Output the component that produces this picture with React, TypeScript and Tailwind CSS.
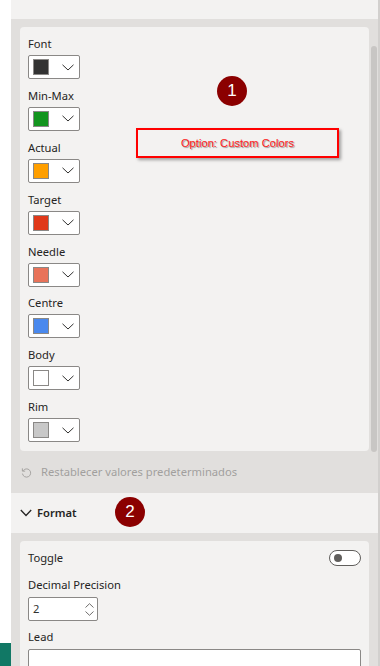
import React from "react";

const font = { fontFamily: '"Segoe UI", "Noto Sans", "Open Sans", sans-serif' };

const items: { label: string; color: string }[] = [
  { label: "Font", color: "#333333" },
  { label: "Min-Max", color: "#13951f" },
  { label: "Actual", color: "#ff9f00" },
  { label: "Target", color: "#e0391a" },
  { label: "Needle", color: "#e8735a" },
  { label: "Centre", color: "#4a89ee" },
  { label: "Body", color: "#ffffff" },
  { label: "Rim", color: "#c8c8c8" },
];

function Chevron() {
  return (
    <svg width="12" height="7" viewBox="0 0 12 7" fill="none">
      <path d="M0.5 0.8 L6 6 L11.5 0.8" stroke="#323130" strokeWidth="1" />
    </svg>
  );
}

function ColorPicker({ color }: { color: string }) {
  return (
    <div className="w-[52px] h-[24px] border border-[#8a8886] rounded-[2px] bg-white flex items-center pl-[4px]">
      <div className="w-[16px] h-[16px] border border-[#8a8886]" style={{ background: color }} />
      <div className="ml-[13px] flex items-center">
        <Chevron />
      </div>
    </div>
  );
}

export default function App() {
  return (
    <div className="w-[380px] h-[666px] flex overflow-hidden bg-white text-[#252423]" style={font}>
      <div className="w-[11px] flex flex-col justify-end">
        <div className="h-[23px] bg-[#117865]" />
      </div>
      <div className="w-[367px] bg-[#e1dfdd] flex flex-col">
        <div className="h-[19px] bg-[#f3f2f1] shrink-0" />
        <div className="flex pt-[8px] shrink-0">
          <div className="ml-[9px] w-[349px] h-[424px] bg-[#f3f2f1] rounded-[4px] relative pt-[9px] pl-[8px] flex flex-col">
            {items.map((it) => (
              <div key={it.label} className="flex flex-col h-[52px]">
                <div className="h-[16px] leading-[16px] text-[11.2px]">{it.label}</div>
                <div className="mt-[3px]">
                  <ColorPicker color={it.color} />
                </div>
              </div>
            ))}
            <div className="absolute left-[197px] top-[49px] w-[30px] h-[30px] rounded-full bg-[#8b0000] text-white flex items-center justify-center text-[17px]" style={{ fontFamily: '"Liberation Sans", Arial, sans-serif' }}>
              1
            </div>
            <div
              className="absolute left-[116px] top-[101px] w-[203px] h-[30px] border-2 border-[#ff0000] flex items-center justify-center text-[11.2px] text-[#ff2020] shadow-[2px_2px_3px_rgba(0,0,0,0.35)]"
              style={{ fontFamily: '"Liberation Sans", Arial, sans-serif', textShadow: "1px 1px 1px rgba(0,0,0,0.4)" }}
            >
              Option: Custom Colors
            </div>
          </div>
          <div className="ml-[2px] mt-[19px] w-[6px] h-[406px] bg-[#c8c6c4] rounded-[3px]" />
        </div>
        <div className="h-[41px] flex items-center pl-[10px] gap-[9px] text-[11.2px] text-[#a19f9d] shrink-0">
          <svg width="11" height="11" viewBox="0 0 12 12" fill="none">
            <path d="M2.2 4.2 A4.5 4.5 0 1 1 1.6 7.2" stroke="#a19f9d" strokeWidth="1" />
            <path d="M1.5 1.5 V4.5 H4.5" stroke="#a19f9d" strokeWidth="1" />
          </svg>
          <span>Restablecer valores predeterminados</span>
        </div>
        <div className="h-[40px] bg-[#f3f2f1] flex items-center pl-[9px] relative shrink-0">
          <svg width="12" height="8" viewBox="0 0 12 8" fill="none">
            <path d="M0.8 1 L6 6.5 L11.2 1" stroke="#252423" strokeWidth="1.3" />
          </svg>
          <span className="ml-[5px] text-[11.2px] font-semibold">Format</span>
          <div className="absolute left-[104px] top-[4px] w-[30px] h-[30px] rounded-full bg-[#8b0000] text-white flex items-center justify-center text-[17px]" style={{ fontFamily: '"Liberation Sans", Arial, sans-serif' }}>
            2
          </div>
        </div>
        <div className="pt-[8px] flex">
          <div className="ml-[9px] w-[349px] h-[200px] bg-[#f3f2f1] rounded-[4px] pt-[9px] pl-[8px] pr-[8px] flex flex-col">
            <div className="flex items-center justify-between h-[16px]">
              <span className="text-[11.2px] leading-[16px]">Toggle</span>
              <div className="w-[32px] h-[16px] rounded-full border border-[#605e5c] bg-white flex items-center pl-[4px]">
                <div className="w-[8px] h-[8px] rounded-full bg-[#605e5c]" />
              </div>
            </div>
            <div className="mt-[11px] h-[16px] leading-[16px] text-[11.2px]">Decimal Precision</div>
            <div className="mt-[4px] w-[70px] h-[24px] border border-[#8a8886] rounded-[2px] bg-white flex items-center pl-[4px] pr-[3px] justify-between">
              <span className="text-[11.2px] text-[#323130]">2</span>
              <div className="flex flex-col gap-[3px]">
                <svg width="9" height="5" viewBox="0 0 9 5" fill="none">
                  <path d="M0.5 4.5 L4.5 0.7 L8.5 4.5" stroke="#605e5c" strokeWidth="0.9" />
                </svg>
                <svg width="9" height="5" viewBox="0 0 9 5" fill="none">
                  <path d="M0.5 0.5 L4.5 4.3 L8.5 0.5" stroke="#605e5c" strokeWidth="0.9" />
                </svg>
              </div>
            </div>
            <div className="mt-[8px] h-[16px] leading-[16px] text-[11.2px]">Lead</div>
            <div className="mt-[4px] w-[333px] h-[30px] border border-[#8a8886] rounded-[2px] bg-white" />
          </div>
        </div>
      </div>
      <div className="w-[2px] bg-[#d2d0ce]" />
    </div>
  );
}
